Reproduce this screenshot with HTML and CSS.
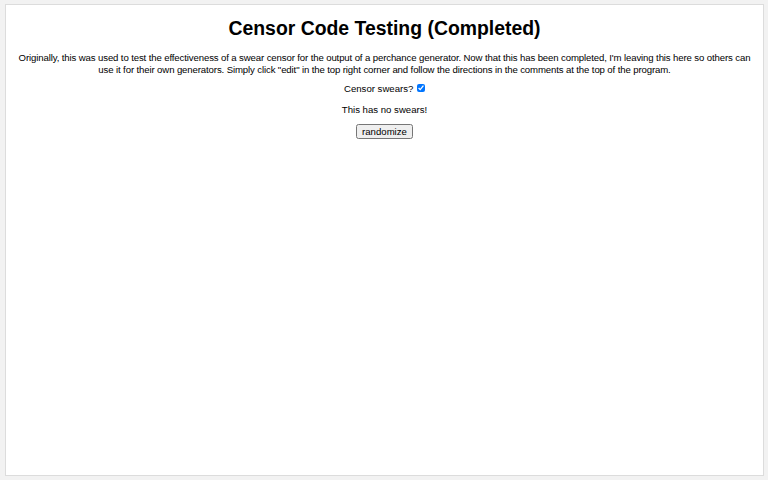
FILE: index.html
```html
<!doctype html>
<html lang="en">

<head>
    <meta charset="UTF-8" />
    <meta name="viewport" content="width=device-width, initial-scale=1.0" />
    <title>Censor Code Testing</title>
    <link rel="stylesheet" href="styles.css">
</head>

<body>
    <div class="page">
        <h1>Censor Code Testing (Completed)</h1>
        <p class="intro">Originally, this was used to test the effectiveness of a swear censor for the output of a perchance generator. Now that this has been completed, I'm leaving this here so others can use it for their own generators. Simply click "edit" in the top right corner and follow the directions in the comments at the top of the program.</p>
        <p>
            <label for="censor">Censor swears?</label>
            <input type="checkbox" id="censor" checked />
        </p>
        <p id="output">This has no swears!</p>
        <p class="actions">
            <button type="button" id="randomize">randomize</button>
        </p>
    </div>
</body>

</html>
```

FILE: styles.css
```css
html,
body {
    height: 100%;
}

body {
    margin: 0;
    padding: 4px 4px 4px 5px;
    box-sizing: border-box;
    background: #f2f2f2;
    font-family: "Liberation Sans", Arial, sans-serif;
}

.page {
    height: 100%;
    box-sizing: border-box;
    background: #fff;
    border: 1px solid #dcdcdc;
    padding: 0 5px;
    text-align: center;
    font-size: 9.6px;
    line-height: 12px;
    color: #000;
}

h1 {
    font-size: 19.4px;
    line-height: 24px;
    margin: 11px 0 12px;
}

p {
    margin: 0 0 9px;
}

.intro {
    margin-bottom: 7px;
    letter-spacing: -0.12px;
}

#output {
    margin-bottom: 8px;
}

input[type="checkbox"] {
    width: 8px;
    height: 8px;
    margin: 0 0 0 1px;
    vertical-align: 0;
}

button {
    font-family: "Liberation Sans", Arial, sans-serif;
    font-size: 9.6px;
    line-height: 11px;
    padding: 0 4px;
}
```
